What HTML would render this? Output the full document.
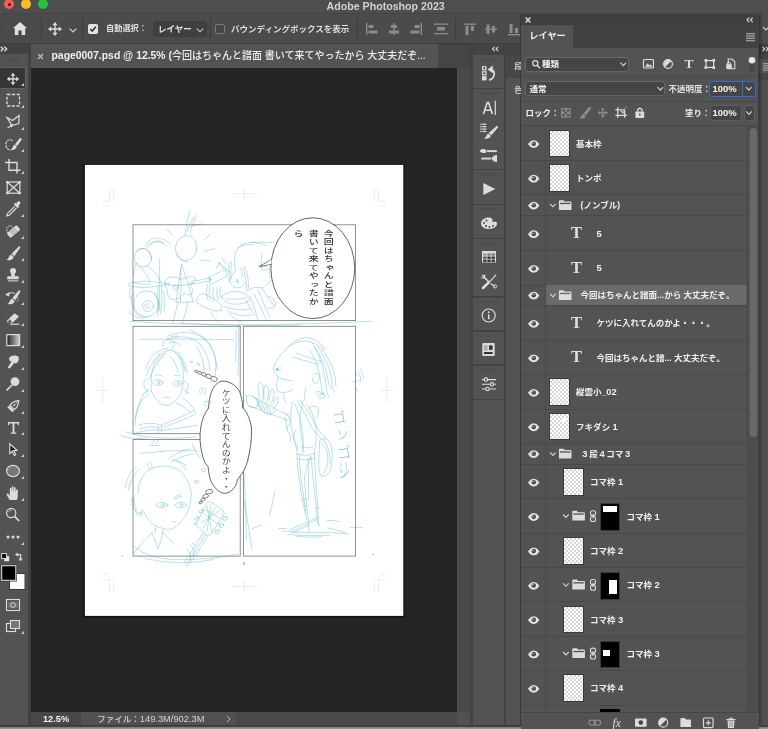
<!DOCTYPE html>
<html lang="ja">
<head>
<meta charset="utf-8">
<title>Adobe Photoshop 2023</title>
<style>
*{box-sizing:border-box;margin:0;padding:0}
html,body{width:768px;height:729px;overflow:hidden;background:#535353}
body{position:relative;font-family:"Liberation Sans","Noto Sans CJK JP",sans-serif;font-size:8.5px;color:#e6e6e6;font-weight:700;-webkit-font-smoothing:antialiased}
.abs{position:absolute}
svg{position:absolute;overflow:visible}
.t{position:absolute;white-space:nowrap;line-height:12px}
/* top */
#title{left:0;top:0;width:768px;height:13px;background:#4e4e4e}
#title .t{left:326.500px;top:-0.500px;font-size:10.650px;font-weight:700;color:#d2d2d2;line-height:12px}
.tl{position:absolute;top:-1px;width:10px;height:10px;border-radius:50%}
#opt{left:0;top:13px;width:768px;height:31px;background:#4b4b4b;border-top:1px solid #454545;border-bottom:1px solid #3e3e3e}
.vsep{position:absolute;width:1px;background:#3c3c3c}
/* tab row */
#tabrow{left:0;top:44px;width:768px;height:24px;background:#454545;border-top:1px solid #3d3d3d}
#tab{left:31px;top:44px;width:407px;height:24px;background:#535353}
#tab .t{font-size:10px;font-weight:500;color:#efefef;top:4.500px;left:20.500px;line-height:14px}
/* left tools */
#tools{left:0;top:44px;width:28px;height:681px;background:#535353}
#toolsep{left:28px;top:44px;width:3px;height:681px;background:#414141}
#toolhead{left:0;top:44px;width:28px;height:10px;background:#424242}
#movesel{left:-1px;top:67.300px;width:27px;height:21.400px;background:#363636;border:1px solid #606060;border-radius:2px}
/* canvas */
#canvas{left:31px;top:68px;width:426px;height:644px;background:#242424}
#page{left:85px;top:165px;width:318px;height:451px;background:#fff}
#vscroll{left:457px;top:68px;width:13px;height:644px;background:#494949;border-left:1px solid #505050}
#status{left:31px;top:712px;width:439px;height:13px;background:#515151}
#zoomf{left:31px;top:712px;width:50px;height:13px;background:#484848}
/* bottom */
.be{top:725px;height:4px;background:linear-gradient(#3a3a3a 0,#3a3a3a 35%,#727272 45%,#9a9a9a 100%)}
/* collapsed strip */
#strip{left:470px;top:44px;width:51px;height:681px;background:#434343}
.grp{position:absolute;left:473px;width:31px;background:#535353}
.grip{position:absolute;left:7px;top:3px;width:17px;height:2.500px;background:repeating-linear-gradient(90deg,#4a4a4a 0,#4a4a4a 1px,#525252 1px,#525252 2px)}
#col2{left:506px;top:55px;width:15px;height:670px;background:#535353}
#col2a{left:506px;top:55px;width:15px;height:23px;background:#474747}
/* right behind */
#rbehind{left:759px;top:13px;width:9px;height:712px;background:#4d4d4d}
/* layers panel */
#lp{left:520px;top:14px;width:239px;height:715px;background:#535353;border-left:1px solid #3a3a3a;border-right:1px solid #3f3f3f}
#lphead{left:521px;top:14px;width:237.500px;height:11px;background:#3f3f3f}
#lptabs{left:521px;top:24.700px;width:237.500px;height:23.300px;background:#424242}
#lptab{left:521px;top:24.700px;width:52px;height:23.300px;background:#535353}
.field{position:absolute;background:#454545;border:1px solid #666;border-radius:3px}
.hline{position:absolute;height:1px;background:#484848}
.row{position:absolute;left:521px;width:225px;border-bottom:1px solid #474747}
.eyecol{position:absolute;left:521px;width:25px;top:126px;height:586px;border-right:1px solid #474747}
.thumb{position:absolute;width:20.400px;height:27.800px;background:#fff;border:1px solid #3a3a3a;background-image:linear-gradient(45deg,#d6d6d6 25%,transparent 25%,transparent 75%,#d6d6d6 75%),linear-gradient(45deg,#d6d6d6 25%,transparent 25%,transparent 75%,#d6d6d6 75%);background-size:4px 4px;background-position:0 0,2px 2px}
.mask{position:absolute;width:20.400px;height:27.800px;background:#000;border:1px solid #3a3a3a}
.ln{position:absolute;white-space:nowrap;line-height:12px;font-size:8.5px;color:#f0f0f0}
.vt{writing-mode:vertical-rl;font-family:"Liberation Sans","Noto Sans CJK JP",sans-serif;font-weight:500;font-size:10px;letter-spacing:1.54px;line-height:12px;width:12px;color:#333;white-space:nowrap;transform-origin:0 0;transform:scaleY(0.74)}
.vt2{font-size:9px;font-weight:400;color:#444;letter-spacing:1.1px;transform:scaleY(0.85)}
.dg{font-size:9.400px}
.dw{display:inline-block;width:8.600px;text-align:center;font-size:9.400px}
</style>
</head>
<body><div id="root" style="position:absolute;left:0;top:0;width:768px;height:729px;overflow:hidden;will-change:transform">
<!-- SKELETON -->
<div id="title" class="abs"><div class="t">Adobe Photoshop 2023</div>
<div class="tl" style="left:4px;background:#ee5f57"></div><div class="tl" style="left:21px;background:#f6bd2e"></div><div class="tl" style="left:38px;background:#28c33f"></div>
<div class="abs" style="left:8px;top:3px;width:3px;height:3px;border-radius:50%;background:#5a0b08"></div>
</div>
<div id="opt" class="abs"></div>
<div id="tabrow" class="abs"></div>
<div id="tab" class="abs"><svg style="left:6.300px;top:8.800px" width="7" height="7" viewBox="0 0 7 7"><path d="M1 1 L6 6 M6 1 L1 6" stroke="#bcbcbc" stroke-width="1.250"/></svg><div class="t"><span style="font-size:10.4px;font-weight:700">page0007.psd @ 12.5% (</span>今回はちゃんと譜面 書いて来てやったから 大丈夫だぞ...</div></div>
<div id="tools" class="abs"></div><div id="toolsep" class="abs"></div><div id="toolhead" class="abs"></div><div id="movesel" class="abs"></div>
<div id="canvas" class="abs"></div>
<div id="vscroll" class="abs"></div>
<div id="status" class="abs"></div><div id="zoomf" class="abs"></div>
<div class="abs" style="left:236px;top:712px;width:221px;height:13px;background:#494949"></div>
<div class="t" style="left:43px;top:712.800px;font-size:9.200px;color:#f2f2f2;line-height:12px">12.5%</div>
<div class="t" style="left:97.300px;top:712.800px;font-size:8.500px;font-weight:500;color:#d4d4d4;line-height:12px">ファイル：<span style="font-size:9.300px">149.3M/902.3M</span></div>
<svg style="left:226px;top:715px" width="5" height="8" viewBox="0 0 5 8"><path d="M1 0.800 L4 4 L1 7.200" fill="none" stroke="#bdbdbd" stroke-width="1"/></svg>
<div id="strip" class="abs"></div>
<div id="col2" class="abs"></div><div id="col2a" class="abs"></div>
<div id="rbehind" class="abs"></div>
<div id="lp" class="abs"></div><div id="lphead" class="abs"></div><div id="lptabs" class="abs"></div><div id="lptab" class="abs"></div>

<!-- options bar content -->
<div class="vsep" style="left:1px;top:21px;height:16px;background:#414141"></div>
<svg style="left:13px;top:22px" width="14" height="13" viewBox="0 0 14 13"><path d="M7 0 L0 6.2 L1.8 6.2 L1.8 13 L5.4 13 L5.4 8.6 L8.6 8.6 L8.6 13 L12.2 13 L12.2 6.2 L14 6.2 Z" fill="#e0e0e0"/></svg>
<div class="vsep" style="left:41px;top:18px;height:21px"></div>
<svg style="left:48px;top:22px" width="14" height="14" viewBox="0 0 14 14"><g fill="#dcdcdc"><path d="M7 0 L9.6 3.2 L7.7 3.2 L7.7 6.3 L10.8 6.3 L10.8 4.4 L14 7 L10.8 9.6 L10.8 7.7 L7.7 7.7 L7.7 10.8 L9.6 10.8 L7 14 L4.4 10.8 L6.3 10.8 L6.3 7.7 L3.2 7.7 L3.2 9.6 L0 7 L3.2 4.4 L3.2 6.3 L6.3 6.3 L6.3 3.2 L4.4 3.2 Z"/></g></svg>
<svg style="left:69px;top:28px" width="8" height="5" viewBox="0 0 8 5"><path d="M0.6 0.6 L4 4 L7.4 0.6" fill="none" stroke="#d0d0d0" stroke-width="1.2"/></svg>
<div class="vsep" style="left:82px;top:18px;height:21px"></div>
<div class="abs" style="left:88px;top:24px;width:10px;height:10px;background:#e4e4e4;border-radius:2px"></div>
<svg style="left:88px;top:24px" width="10" height="10" viewBox="0 0 10 10"><path d="M2.2 5 L4.2 7 L7.8 2.8" fill="none" stroke="#333" stroke-width="1.6"/></svg>
<div class="t" style="left:106px;top:23px;font-size:8.2px;color:#dedede">自動選択：</div>
<div class="abs" style="left:153px;top:21px;width:54px;height:16px;background:#3f3f3f;border-radius:2px"></div>
<div class="t" style="left:158px;top:23px;font-size:8.5px;color:#e4e4e4">レイヤー</div>
<svg style="left:196px;top:28px" width="8" height="5" viewBox="0 0 8 5"><path d="M0.8 0.6 L4 3.8 L7.2 0.6" fill="none" stroke="#c8c8c8" stroke-width="1.1"/></svg>
<div class="vsep" style="left:210px;top:18px;height:21px"></div>
<div class="abs" style="left:215px;top:24px;width:10px;height:10px;background:#464646;border:1px solid #7a7a7a;border-radius:2px"></div>
<div class="t" style="left:231px;top:23px;font-size:8.5px;color:#dedede">バウンディングボックスを表示</div>
<div class="vsep" style="left:357px;top:18px;height:21px"></div>
<!-- align icons -->
<g></g>
<svg style="left:366px;top:23px" width="160" height="13" viewBox="0 0 160 13"><g fill="#8c8c8c">
<rect x="0" y="0" width="1.4" height="12"/><rect x="2.5" y="2" width="5" height="3"/><rect x="2.5" y="7.5" width="9" height="3"/>
<rect x="27.3" y="0" width="1.4" height="12"/><rect x="25" y="2" width="6" height="3"/><rect x="23" y="7.5" width="10" height="3"/>
<rect x="54.6" y="0" width="1.4" height="12"/><rect x="48.5" y="2" width="5" height="3"/><rect x="44.5" y="7.5" width="9" height="3"/>
<rect x="68" y="0.5" width="14" height="1.3"/><rect x="71" y="4" width="8" height="3.5"/><rect x="68" y="10" width="14" height="1.3"/>
<rect x="98" y="0.5" width="12" height="1.4"/><rect x="99.5" y="3" width="3" height="9"/><rect x="105" y="3" width="3" height="5"/>
<rect x="119" y="5.5" width="12" height="1.4"/><rect x="120.5" y="1.5" width="3" height="9.5"/><rect x="126" y="3" width="3" height="6.5"/>
<rect x="142" y="11" width="12" height="1.4"/><rect x="143.500" y="1" width="3" height="9"/><rect x="149" y="5" width="3" height="5"/>
</g></svg>
<div class="vsep" style="left:455px;top:18px;height:21px"></div>


<svg style="left:0;top:0" width="30" height="729" viewBox="0 0 30 729">
<g fill="none" stroke="#dedede" stroke-width="1.400"><path d="M0.800 46.700 L3.100 49 L0.800 51.300 M4.400 46.700 L6.700 49 L4.400 51.300"/></g>
<g stroke="#4a4a4a" stroke-width="1"><path d="M5.5 58 V60.5 M7.5 58 V60.5 M9.5 58 V60.5 M11.5 58 V60.5 M13.5 58 V60.5 M15.5 58 V60.5 M17.5 58 V60.5 M19.5 58 V60.5"/></g>
<!-- move -->
<g transform="translate(13 79)" fill="#dcdcdc"><path d="M0 -6.2 L2.4 -3.2 L0.7 -3.2 L0.7 -0.7 L3.2 -0.7 L3.2 -2.4 L6.2 0 L3.2 2.4 L3.2 0.7 L0.7 0.7 L0.7 3.2 L2.4 3.2 L0 6.2 L-2.4 3.2 L-0.7 3.2 L-0.7 0.7 L-3.2 0.7 L-3.2 2.4 L-6.2 0 L-3.2 -2.4 L-3.2 -0.7 L-0.7 -0.7 L-0.7 -3.2 L-2.4 -3.2 Z"/></g>
<path d="M24 83 L24 86 L21 86 Z" fill="#c8c8c8"/>
<!-- marquee -->
<rect x="7" y="94.5" width="12.5" height="11.5" fill="none" stroke="#dcdcdc" stroke-width="1.3" stroke-dasharray="3 1.6" rx="0.5"/>
<path d="M24 105 L24 108 L21 108 Z" fill="#c8c8c8"/>
<!-- poly lasso -->
<g fill="none" stroke="#dcdcdc" stroke-width="1.2" stroke-linejoin="miter"><path d="M7 117.5 L12.5 120.5 L19 115.5 L18.8 123.5 L12 125.5 Z"/><path d="M13 124.5 L7.5 128 M10.2 124.6 L12 127.2"/></g>
<path d="M24 127 L24 130 L21 130 Z" fill="#c8c8c8"/>
<!-- quick select -->
<g><path d="M12.600 141 C10.800 138.800 6.400 139.400 5.900 143.800 C5.600 148 8.400 150.600 11.200 149.800" fill="none" stroke="#dcdcdc" stroke-width="1.100" stroke-dasharray="2.600 0.900"/><path d="M20.200 137.800 L21.900 139.300 L17.200 146 L15 144.200 Z" fill="#dcdcdc"/><path d="M14.500 144.600 L16.800 146.500 C16.300 149 13.800 150.400 11 149.900 C12.600 148.600 12.700 146 14.500 144.600 Z" fill="#dcdcdc"/></g>
<path d="M24 149 L24 152 L21 152 Z" fill="#c8c8c8"/>
<!-- crop -->
<g fill="none" stroke="#dcdcdc" stroke-width="1.400"><path d="M9 159 V170.200 H20.500 M5 162.500 H17 V173.500"/></g>
<path d="M24 171 L24 174 L21 174 Z" fill="#c8c8c8"/>
<!-- frame -->
<g fill="none" stroke="#dcdcdc" stroke-width="1.200"><rect x="7.200" y="182" width="12.600" height="11.200"/><path d="M7.200 182 L19.800 193.200 M19.800 182 L7.200 193.200"/></g>
<g fill="#dcdcdc"><rect x="6.200" y="181" width="2.200" height="2.200"/><rect x="18.600" y="181" width="2.200" height="2.200"/><rect x="6.200" y="192" width="2.200" height="2.200"/><rect x="18.600" y="192" width="2.200" height="2.200"/></g>
<!-- eyedropper -->
<g><path d="M17.800 201.600 C19.300 200.500 21.200 202.300 20.100 203.900 L18.300 205.900 L19.200 206.800 L17.700 208.300 L13.700 204.300 L15.200 202.800 L16.100 203.700 Z" fill="#dcdcdc"/><path d="M14.700 206.300 L7.400 213.600 L6.700 216 L9.100 215.300 L16.400 208" fill="none" stroke="#dcdcdc" stroke-width="1.200" stroke-linejoin="round"/></g>
<path d="M24 214 L24 217 L21 217 Z" fill="#c8c8c8"/>
<!-- healing -->
<g><g transform="translate(13.5 231.5) rotate(-40)"><rect x="-6.5" y="-3" width="13" height="6" rx="1.2" fill="#dcdcdc"/><path d="M-2.6 -3 V3 M-0.9 -3 V3 M0.9 -3 V3 M2.6 -3 V3" stroke="#777" stroke-width="0.6"/></g><path d="M8 233 C5.5 230 6.5 226 10 225.8 C11.6 225.8 12.6 226.8 13 227.8" fill="none" stroke="#dcdcdc" stroke-width="0.9" stroke-dasharray="1.6 0.8"/></g>
<path d="M24 236 L24 239 L21 239 Z" fill="#c8c8c8"/>
<!-- brush -->
<g fill="#dcdcdc"><path d="M19.200 246.100 L20.500 247.200 L14.300 256.300 L11.400 254 Z"/><path d="M10.800 254.600 L13.700 256.900 C13.100 259.500 10 260.700 6.600 260.100 C8.800 258.800 8.800 256 10.800 254.600 Z"/></g>
<path d="M24 258 L24 261 L21 261 Z" fill="#c8c8c8"/>
<!-- stamp -->
<g fill="#dcdcdc"><circle cx="13" cy="271" r="3"/><path d="M11.6 272.5 H14.4 L15.2 276.4 H10.8 Z"/><rect x="7.2" y="276.3" width="11.6" height="3" rx="0.6"/><rect x="7.8" y="280.2" width="10.4" height="1.3" fill="#bdbdbd"/></g>
<path d="M24 280 L24 283 L21 283 Z" fill="#c8c8c8"/>
<!-- history brush -->
<g fill="#dcdcdc"><path d="M19.200 290.100 L20.500 291.200 L15.300 300.300 L12.400 298 Z"/><path d="M11.800 298.600 L14.700 300.900 C14.100 303.500 11 304.700 7.600 304.100 C9.800 302.800 9.800 300 11.800 298.600 Z"/><path d="M5 294.8 L9.4 292 L9.2 296.6 Z"/><path d="M8.6 293.8 C11 292.4 13.6 292.6 15 293.6" fill="none" stroke="#dcdcdc" stroke-width="1"/><path d="M17.6 296.6 C18.6 298.6 18.2 300.6 16.6 302" fill="none" stroke="#dcdcdc" stroke-width="0.8" stroke-dasharray="1.2 0.8"/></g>
<path d="M24 302 L24 305 L21 305 Z" fill="#c8c8c8"/>
<!-- eraser -->
<g><path d="M14.6 313.2 L19 316.4 L12.8 322.6 L7.4 322.6 L7 320.6 Z" fill="#dcdcdc"/><path d="M9.3 319.2 L11.8 321.4 L10.6 322.6 L8 322.6 Z" fill="#535353"/><path d="M10 324.2 H19.4" stroke="#dcdcdc" stroke-width="1.2"/></g>
<path d="M24 323 L24 326 L21 326 Z" fill="#c8c8c8"/>
<!-- gradient -->
<defs><linearGradient id="gt" x1="0" x2="1"><stop offset="0" stop-color="#222"/><stop offset="1" stop-color="#d0d0d0"/></linearGradient></defs>
<rect x="6.8" y="334.6" width="12.8" height="11" fill="url(#gt)" stroke="#dcdcdc" stroke-width="1.2"/>
<path d="M24 345 L24 348 L21 348 Z" fill="#c8c8c8"/>
<!-- smudge -->
<g fill="#dcdcdc"><path d="M9.4 357.4 C11 355.2 16.4 354.6 18.2 356.6 C19.8 358.6 18.6 362.6 16 363.4 C15.2 363.6 14.8 363 14.6 362.4 L10.2 368 C9.4 369 7.6 368 8.2 366.8 L11.6 361.4 C10 361.6 8.4 359.6 9.4 357.4 Z"/></g>
<path d="M24 367 L24 370 L21 370 Z" fill="#c8c8c8"/>
<!-- dodge -->
<g><circle cx="15" cy="381.6" r="4.4" fill="#dcdcdc"/><path d="M12 385 L6.6 390.4" stroke="#dcdcdc" stroke-width="1.5"/></g>
<path d="M24 389 L24 392 L21 392 Z" fill="#c8c8c8"/>
<!-- pen -->
<g transform="translate(13.5 406) rotate(45)"><path d="M0 -7.5 C2.6 -4.2 4 -1.6 3 2 H-3 C-4 -1.6 -2.6 -4.2 0 -7.5 Z" fill="none" stroke="#dcdcdc" stroke-width="1.2"/><path d="M0 -6.8 V-1.6" stroke="#dcdcdc" stroke-width="0.9"/><circle cx="0" cy="-1" r="1" fill="#dcdcdc"/><rect x="-3.6" y="2.8" width="7.2" height="2.4" fill="#dcdcdc"/></g>
<path d="M24 411 L24 414 L21 414 Z" fill="#c8c8c8"/>
<!-- T -->
<g fill="#dcdcdc"><path d="M8 422 H19 V425 H17.8 V423.4 H14.4 V432.4 H16.2 V433.8 H10.8 V432.4 H12.6 V423.4 H9.2 V425 H8 Z"/></g>
<path d="M24 432 L24 435 L21 435 Z" fill="#c8c8c8"/>
<!-- arrow -->
<path d="M9.800 443.800 L9.800 453.600 L12.300 451.200 L14.300 455.400 L15.700 454.700 L13.700 450.600 L17 450.400 Z" fill="#1e1e1e" stroke="#e2e2e2" stroke-width="1.100" stroke-linejoin="miter"/>
<path d="M24 454 L24 457 L21 457 Z" fill="#c8c8c8"/>
<!-- ellipse -->
<ellipse cx="13" cy="471" rx="6.4" ry="5.6" fill="#787878" stroke="#dcdcdc" stroke-width="1.2"/>
<path d="M24 476 L24 479 L21 479 Z" fill="#c8c8c8"/>
<!-- hand -->
<g fill="#dcdcdc"><path d="M9.6 500 C8.8 498.4 7.6 496.4 6.8 495 C6.2 493.8 7.6 493 8.6 494.2 L9.8 495.8 L9.8 488.6 C9.8 487.4 11.4 487.4 11.4 488.6 L11.6 492.4 L11.8 487.2 C11.8 486 13.4 486 13.4 487.2 L13.6 492.4 L14 488 C14 486.8 15.6 486.8 15.6 488 L15.6 492.8 L16.2 490 C16.4 488.8 17.8 489 17.8 490.2 L17.8 496 C17.8 498 17 499.4 16.6 500 Z"/></g>
<path d="M24 498 L24 501 L21 501 Z" fill="#c8c8c8"/>
<!-- zoom -->
<g fill="none" stroke="#dcdcdc"><circle cx="11.2" cy="513" r="4.6" stroke-width="1.2"/><path d="M14.6 516.4 L19.2 521" stroke-width="1.7"/><path d="M8.6 512 C9 510.6 10.4 509.8 11.8 510" stroke-width="0.8"/></g>
<!-- dots -->
<g fill="#dcdcdc"><circle cx="8" cy="537" r="1.5"/><circle cx="13" cy="537" r="1.5"/><circle cx="18" cy="537" r="1.5"/></g>
<path d="M24 542 L24 545 L21 545 Z" fill="#c8c8c8"/>
<!-- default colors -->
<rect x="4.2" y="556.2" width="5" height="5" fill="#e6e6e6"/><rect x="1.6" y="553.6" width="5" height="5" fill="#111" stroke="#e6e6e6" stroke-width="0.9"/>
<!-- swap -->
<g fill="none" stroke="#dcdcdc" stroke-width="1.2"><path d="M17.4 554.6 H20.6 V559"/></g><path d="M15 554.6 L17.8 552.4 V556.8 Z M20.6 561.2 L18.4 558.4 H22.8 Z" fill="#dcdcdc"/>
<!-- swatches -->
<rect x="9.5" y="573.5" width="15.5" height="16" fill="#fff" stroke="#3a3a3a" stroke-width="1"/>
<rect x="1" y="565" width="15.5" height="16" fill="#000" stroke="#3a3a3a" stroke-width="1"/><rect x="1.7" y="565.7" width="14.1" height="14.6" fill="none" stroke="#e8e8e8" stroke-width="1"/>
<!-- quick mask -->
<rect x="6.5" y="599.5" width="13" height="11" fill="none" stroke="#dcdcdc" stroke-width="1.1"/><rect x="7.6" y="601.6" width="10.8" height="6.8" fill="#6e6e6e"/><circle cx="13" cy="605" r="2.4" fill="#6e6e6e" stroke="#dcdcdc" stroke-width="0.9"/>
<!-- screen mode -->
<rect x="6.5" y="623.5" width="9" height="8" fill="none" stroke="#dcdcdc" stroke-width="1.1"/><rect x="10.5" y="620.5" width="9" height="8" fill="#777" stroke="#dcdcdc" stroke-width="1.1"/>
<path d="M24 631 L24 634 L21 634 Z" fill="#c8c8c8"/>
</svg>


<svg style="left:0;top:0" width="768" height="729" viewBox="0 0 768 729">
<!-- page shadow -->
<rect x="83.200" y="164" width="321.600" height="453.700" fill="#141414"/>
<rect x="84.900" y="164.900" width="318.400" height="451" fill="#ffffff"/>
<!-- registration marks -->
<g fill="none" stroke="#e4e4ee" stroke-width="0.7">
<path d="M109.5 189 V201 M113.5 189 V202 M103 201.3 H109.5 M103 206 H108.5"/>
<path d="M378.5 189 V201 M374.5 189 V202 M378.5 201.3 H385.5 M380 206 H385.5"/>
<path d="M109.5 592 V580 M113.5 592 V579 M103 579.7 H109.5 M103 574 H108.5"/>
<path d="M378.5 592 V580 M374.5 592 V579 M378.5 579.7 H385.5 M380 574 H385.5"/>
<path d="M233 193.5 H257 M244.3 188 V200"/>
<path d="M233 586.5 H257 M244.3 580 V592"/>
<path d="M96.5 390.5 H109 M102.6 378 V403"/>
<path d="M380.5 390.5 H393 M386.6 378 V403"/>
</g>
<!-- sketch lines -->
<g id="sk" fill="none" stroke="#4fb4c9" stroke-opacity="0.680" stroke-width="0.600" stroke-linecap="round" stroke-linejoin="round">
<!-- top panel: stick figure -->
<ellipse cx="186.200" cy="248.100" rx="10.700" ry="12.500" transform="rotate(8 186.2 248.1)"/>
<path d="M177 254 Q180 262 188 262"/>
<path d="M185 235.500 Q186.500 221 190 210.800 M190 233 Q192.500 222 196.600 215 M190.800 226.400 Q196 224.500 202.400 223.900 M187 232 Q189 224 193 218"/>
<path d="M204 240.400 L210.600 233.800 M204 251.900 Q209 249.500 214.700 248.600 M200.700 260.100 Q205 260.300 209.800 261 M167 229.700 Q170 232 172.700 235.500"/>
<path d="M181.800 264.300 Q178.500 283 176 302 M181.800 264.300 Q188 283 193.300 302 M176 302 Q180 303.500 184 302.500 Q189 301.500 193.300 302 M178 302 Q175.500 313 172.700 323.500 M188 302 Q185.500 313 182.600 323 M180.500 268 Q181.500 285 180.500 302"/>
<path d="M165 283 Q165 277.500 171 277 Q177 276.500 181 279.500 Q186 277.500 191 276 Q196 276 195.800 279.500 Q193 282.500 189.500 284.500 Q194 289 192 294 Q188 296.500 184 293 Q179 300 172 299.500 Q166 296 167.500 290 Q164.500 287 165 283 Z"/>
<circle cx="175.700" cy="287.300" r="2.500"/>
<path d="M190 281.500 Q200 280.500 210.600 278 M190 284.500 Q200 283 210.600 280.800 M168 285 Q180 287 195 283"/>
<!-- drums -->
<path d="M145.600 246 Q148 239 156.300 238 Q165 238 171 244.500 M147 247 Q152 240.500 160 241 Q164 242 166 246 M150 244 Q156 239 163 243.500"/>
<ellipse cx="143" cy="257.700" rx="8.600" ry="9.300"/><path d="M136 252 Q140 247 146 249 Q151 253 151.500 260 M137 263 Q133 268 134 276 M147 266 Q156 271 161 282 M139 266 Q146 272 150 282"/>
<path d="M128.300 284 Q141 279.500 154 282 Q163 283 169.400 284 M128.500 285.500 Q141 289 154 286.500 Q163 285.500 169.400 284.300 M132 282 Q140 285 150 284"/>
<ellipse cx="146.400" cy="303.800" rx="12.500" ry="13"/><ellipse cx="148" cy="306" rx="5.500" ry="5.500"/><path d="M148 306 Q150 303.500 147.500 302.500 Q144.500 303.500 145.500 307 Q147.500 309.500 150.500 307.500"/>
<path d="M132 287 Q127 293 131 300 M133 292 Q129 300 134 310 Q139 318 148 318 M129 312 Q135 318 143 318.500 M154 292 Q160 300 158 312"/>
<path d="M159.600 259 V310 M157.800 286 V316 M161.500 285 Q163 300 160.500 314 M163 290 Q166 300 164 312"/>
<!-- hand/stick and hi-hat -->
<path d="M209 277 L224 270 Q227.500 272 227 276 L212 284 Q208.500 282 209 277 Z"/><circle cx="210.300" cy="279.300" r="0.800"/>
<path d="M216.400 268.400 L219.700 262.600 L227 270.800 M229 261.800 V282.400 M231.500 262 Q230.500 270 231 280"/>
<path d="M207.500 285 Q205.500 292 207.500 300 M210 284 Q208.500 292 210 300 M213.500 287 Q212 294 214 301 M217 288 Q216 294 218 300 M220.500 287 Q219 293 221 299"/>
<path d="M197 298.500 Q199 293 205 294 Q212 297 218 302 Q224 306 221 310.500 Q216 312.500 209 309 Q200 306 197 302.500 Z"/>
<path d="M222 296 Q230 290 240 292 Q248 294 250 300 Q244 305 232 304 Q224 303 222 296 Z M224 306 Q236 312 250 309 M227 310 Q238 318 252 315 M211 312 Q213 318 219 322 M229 313 Q233 319 241 322 M226 299 Q236 300 246 298"/>
<!-- top right character -->
<path d="M234.800 256.500 Q236 247 244 243.500 Q250 241 257 243 Q262 240.500 268 243 Q273 240.500 277 242.500"/>
<path d="M238 248 Q246 243 254 245 M250 242.800 Q258 241 266.300 245.600"/>
<path d="M234.800 256.500 Q233 264 236 270 Q233 274 229.500 279 Q230 286 236 288 Q242 288 245.500 283"/>
<path d="M243 267.500 Q246.500 278 247 290.800 M240.500 268 Q243 272 242 277 M244.500 266 Q249 276 248.500 288"/>
<path d="M237 279 L238 283.500 M236 281.500 L239 281"/>
<path d="M218 262 L223 268 L230 272 M222 258 L226 264"/>
<path d="M254 293.600 Q260 306 266.300 319.700 M258 290 Q264 304 270 318 M250 296 Q255 308 258 320 M262 288 Q268 298 274 306"/>
<path d="M248 290 Q254 286 262 288 Q268 284 272 280 M272 262 Q268 270 270 278 M262 270 Q260 262 262 254"/>
<path d="M262 267 Q265 265.500 268 267.500 M263 269.500 Q266 271 269 269.500"/>
<path d="M268 296 Q274 298 276 304 Q274 310 268 308 M246 300 Q250 310 256 316"/>
<path d="M130 321.500 Q200 326 290 324.200 Q330 323.200 372 321.300 M180 323 Q240 327 300 325"/>
<!-- mid-left panel: girl -->
<path d="M151.300 390.800 Q150 372 156 360 Q163 349 172 350.500 Q181 354 183 368 Q184 382 181.800 390.800 Q178 400 171 404.500 Q166 406.500 161.500 404 Q154 399 151.300 390.800 Z"/>
<path d="M163 346.500 Q162 341 167 339.500 Q173 339 174.500 343.500 Q174 348 170 349.500 M167 339.500 Q172 335 178 336 M169 343 Q175 340 180 345"/>
<path d="M145.600 369.400 Q148 358 157 352 Q163 348 168 348 M146.500 376 Q150 362 160 354 M149 380 Q153 366 164 356 M157 362 Q160 356 166 353 M178 352 Q185 360 187 372 M174 350.500 Q183 358 185.500 372 M170 356 Q176 362 178 372"/>
<ellipse cx="157.900" cy="382.600" rx="4.800" ry="2.700"/><ellipse cx="177.700" cy="383.400" rx="4.800" ry="2.700"/><circle cx="158.600" cy="382.600" r="1.300"/><circle cx="178.300" cy="383.400" r="1.300"/>
<path d="M155 375.500 Q158 374 161.500 375.500 M174.500 375.500 Q178 374 181 376 M163.500 397.400 H169.500"/>
<path d="M147 379 Q143 380 144 386 Q145.500 391 149 389.500 M184 381 Q188.500 381.500 188 387 Q187 391.500 184 390"/>
<circle cx="186.700" cy="392.400" r="1.300"/><circle cx="146.500" cy="391.500" r="1.200"/>
<path d="M150 394 Q141 398 138 408 Q135.500 416 135 425 M144.800 392.400 Q138 402 135 418.800 M183 398 Q191 403 195.800 412.200 M176 403 Q184 406 190 412"/>
<path d="M138.200 425.300 Q150 421 161.200 425.300 Q178 419 194.100 410.500 M134.900 433.600 Q150 428 162 430.500 Q180 428 197.400 425.300 M161.200 425.300 Q163 428 161.500 431 M140 429 Q150 425 160 428 M164 427 Q180 422 196 414 M158 426 Q159.500 430 157 433"/>
<path d="M139.800 339.400 Q186 338.600 233.600 339.600"/>
<path d="M168 336 Q186 328 202 337 Q216 348 217.200 369.400 M172 338 Q188 334 199 343 Q209 354 210 370 M190 330 Q208 336 214 352 Q218 366 214 380 M196 346 Q204 356 204 372"/>
<path d="M238.600 325 Q239.500 350 238 375 M236 330 Q237 345 235.500 362"/>
<path d="M190.500 361.500 Q192.500 360 192.500 362.500 Q191 364 190.500 361.500 M197 363.500 Q199.500 362 200 365 Q198 366.500 197 363.500"/>
<path d="M126 432 Q150 441 196 437 M122 436 Q134 440 146 438"/>
<!-- right panel: fish-head person -->
<path d="M285.800 349.700 Q292 340 305.600 337.300 Q318 338 325.300 349.700 M288 347 Q296 341 306 341 Q316 342 322 349"/>
<path d="M285.800 349.700 Q276 358 273.500 368.600 Q273.500 373 278.400 377.700 Q285 380 292.400 381"/>
<path d="M277.600 390.800 Q282 395 292.400 390 M278.400 377.700 Q275 384 277.600 390.800 M284 394 Q283 400 287 404"/>
<circle cx="277.200" cy="369.400" r="1.200" fill="#4fb4c9" fill-opacity="0.7"/>
<path d="M279.500 367 L281 368 M279.500 371.500 L281 371"/>
<path d="M292.400 357 Q305 361 318.700 364.500 M296 353 Q310 358 322 362"/>
<path d="M312.100 343.100 Q326 362 328 380 Q329 388 335.200 390.800 M315.400 348 Q325 368 326 386 Q327 394 328.600 397.400 M318 347 Q332 366 332.500 388 M322 349 Q336 368 336 386 M310 350 Q320 368 321 384 Q321.500 392 324 396"/>
<path d="M313.800 374.400 Q318.500 371 319.500 377 Q319 383.500 314.500 383.400 Q311 381 313 377.500"/>
<path d="M316 392 Q319 390 322 393 M317 395.500 Q321 392 325 394.500 M318 398 L324 393 M320 399 L326 396"/>
<path d="M306 388 Q303 394 305 400"/>
<!-- hand with fingers -->
<path d="M259.500 398 Q257 388 259 383 Q262 381 263 386 Q264 392 263 400 M264 399 Q263 388 265.500 385 Q268.500 385 268.500 390 Q268.500 396 267 402 M269 401 Q269.500 392 272 389 Q275 389.500 274 395 Q273 400 271 404 M273 404 Q275 398 277.500 396.500 Q279.500 398 277.500 403 Q276 407 273 409"/>
<path d="M258 402 Q260 410 266 414 Q272 416 276 410"/>
<!-- guitar head + neck -->
<path d="M246.300 395.800 Q250 394 253 396.500 L258 400.500 Q259 404 257 407 Q252 409 248.500 406 Q245.500 401 246.300 395.800 Z"/>
<path d="M253 396.500 L289 416 M249 406 L288 420.500 M256 399 L259 408 M259 400.500 L262 409.500 M262 402 L265 411 M265 403.500 L268 412.500 M268 405 L271 414"/>
<path d="M287 414 Q291 418 290 424 Q286 426 288 432 Q292 436 290 442 M284 416 Q288 422 286 430"/>
<!-- torso -->
<path d="M292.400 402.400 Q290 412 291 424 Q293 438 297 450 M297.300 400.700 Q306 414 312 428 Q318 436 322 440.200 M300 400 Q310 412 316 426 Q320 434 326 438 M303 401 Q299 414 300 428 Q302 440 304 452"/>
<path d="M295 404 Q301 418 303 436 Q304 446 302 454 M307 404 Q314 414 316 428 Q317 442 314 453"/>
<path d="M309 408 Q314 404 318 408 Q320 414 316 418 M296 430 Q292 436 295 442 Q299 446 297 452"/>
<!-- guitar body on back -->
<path d="M320 440 Q327 436 331 444 Q334 456 331 468 Q327 478 321 476 Q318 470 319 458 Z M322 444 Q328 448 328 460 Q327 470 323 474 M324 440 Q331 450 330 464"/>
<!-- legs -->
<path d="M296.500 453.200 Q298 474 301 492 Q303.500 504 305.400 513.800 M299 454 Q300 476 303.500 496 Q305.500 508 306.500 520 M310.800 456.700 Q306.500 466 304.500 476.400 Q305 494 307.500 512 Q308.500 524 309 531.600"/>
<path d="M314.300 453 Q315.500 476 317 498 Q318 514 318.800 526.300 M311 456 Q313 478 315.500 500 Q316.500 514 317.500 524 M308 458 Q309 480 308.500 500"/>
<path d="M297 454 Q306 457 315 453.500 M298 459 Q306 461.500 314 458.500 M300 446 Q308 450 314 446"/>
<path d="M302 500 L306 499 M303 506 L307 505.500 M316 508 L319 507.500"/>
<!-- ground -->
<path d="M289.400 529.900 Q304 523 317.900 517.400 M291 532 Q303 526 316 520 M293 533 L309 525"/>
<path d="M278.700 528.500 H286 M282 531 Q300 533 320 532.500 Q334 532 348.200 534 M288 534.500 Q306 536.500 330 535.200 M296 536.500 Q310 538 322 536.800 M327 520.500 Q334 520 339 521.500 M328 528 Q338 530 346 533"/>
<path d="M350 527.200 Q356 527 362.500 527.700"/>
<path d="M275.100 491.500 Q272.500 503 269.700 515.600 M251.900 529 Q256 526.500 260.800 525.400 M243.500 497.800 Q248 522 251.900 549.500"/>
<path d="M346 462 Q348.500 470 343 477 M340.500 462.500 L341.500 467"/>
<path d="M355 372 L357 376 M352 382 Q356 380 360 381 M358.500 372 Q361 376 361 382 M360.500 369 Q363.500 373 363.500 379 M356 388 L358 392"/>
<!-- bottom-left panel: boy -->
<path d="M137.800 493.500 Q139 476 150 469 Q161 464 174 467.500 Q188 474 191.300 491.700 Q191.500 505 186 514.900 Q181 524 171.700 529.200 Q162 530 152.100 523.800 Q146 518 143.200 511.300"/>
<path d="M135.200 495.300 Q131.500 498 133.500 506 Q135.500 514 139.600 516.700 Q142.500 516 142 510 M134.500 499 Q133 502 135 506 M136 508 Q134.500 510.500 137.500 513.500"/>
<circle cx="139.800" cy="513" r="1.100"/><path d="M133 497 L131 501 M134 502 L131.500 505 M135 507 L132.500 509.500"/>
<ellipse cx="161.900" cy="505.100" rx="5.800" ry="2.700"/><ellipse cx="180.600" cy="505.100" rx="5.600" ry="2.700"/><circle cx="163" cy="505.100" r="1.400"/><circle cx="181.500" cy="505.100" r="1.400"/>
<path d="M173.500 498 Q177 495.500 180.600 494.400 M174.500 499.500 Q178 497 181.500 496 M172 521.500 Q173.500 523 176 521.500 M155.700 527.400 Q156 530 154.800 532.700 M163 529.500 Q163.500 531 162.800 532.700"/>
<path d="M152.100 532.700 Q155 541 158.300 548.800 Q161 541 162.800 532.700 M152.100 532.700 Q142 541 133.400 554.100 M162.800 532.700 Q168.500 537 173.500 543.400"/>
<path d="M125.300 488.100 Q127 474 136 466.700 M128.500 490 Q130.500 477 139.500 469 M146.700 463.200 Q148.500 466 150 469.500 M150 461 Q151.500 464.500 152.500 468 M176 461 Q182 463.500 186 470 M172 459.500 Q180 460.500 186 466"/>
<path d="M139.600 453.400 Q168 449.500 196.700 450.700 M152 444 L155 440 M156 444 L158 440.500 M150 445.500 H160"/>
<path d="M168 459 Q178 451 190 449 M172 462 Q182 455 194 454 M192 444 Q196 452 200 458"/>
<!-- guitar head -->
<path d="M207.400 502.400 Q209.500 500.500 212 502.500 L223.400 511.300 Q225 513.500 223 516 L210.900 534.500 Q208 536 205 534 L196.700 525.600 Q196 523 198 520.500 Z"/>
<path d="M207 506 L212 532 M211 505 L207 531 M215 508 L203 528 M219 511 L201 523 M203 513 L219 525 M205 509 L221 519"/>
<ellipse cx="225.200" cy="518.500" rx="2.400" ry="1.600" transform="rotate(-30 225.200 518.500)"/><ellipse cx="221.600" cy="525.600" rx="2.400" ry="1.600" transform="rotate(-30 221.600 525.600)"/><ellipse cx="217.200" cy="531.800" rx="2.400" ry="1.600" transform="rotate(-30 217.200 531.800)"/>
<ellipse cx="201.100" cy="511.300" rx="2.200" ry="1.400" transform="rotate(-30 201.100 511.300)"/><ellipse cx="196.700" cy="518.500" rx="2.200" ry="1.400" transform="rotate(-30 196.700 518.500)"/>
<path d="M222 516 L224.500 517.500 M218.500 523 L221 524.500 M214.500 529.500 L216.500 531 M193 524.500 L195.500 522.500 L195 525.500"/>
<path d="M203 533 Q194 548 184.200 563 M208 535.500 Q199 550 189 565 M205.500 534.500 Q197 548 186 566 M190 545 Q196 549 193.500 556 M186.500 549 Q192.500 553 190 560 M192 543 L197 547"/>
<path d="M134.300 547 Q150 559 173.500 559.500 Q208 560.500 237.700 554.100 M145 558.500 Q178 566.500 214 559.500 M122 555.500 L123.500 556"/>
<path d="M201.800 469 Q203.800 466.500 205.500 469.500 Q204.800 472.500 202.500 472 Q201 471 201.800 469 Z M195 481 Q196.700 478.500 198.500 481 Q198 484 196 484 Q194.500 483 195 481 Z"/>
<path d="M243.500 470 Q246 500 246.500 540 M249 440 Q250 452 248 462"/>
</g>
<!-- panel frames -->
<g fill="none" stroke="#777" stroke-width="0.8">
<rect x="133" y="224.800" width="222.600" height="95.800"/>
<rect x="133" y="326.300" width="107.200" height="107.400"/>
<rect x="133" y="439.600" width="107.200" height="116.500"/>
<rect x="243.600" y="326.300" width="112" height="229.800"/>
</g>
<!-- small thought bubbles -->
<g fill="#fff" stroke="#555" stroke-width="0.7">
<ellipse cx="196" cy="371.300" rx="1.500" ry="1.100" transform="rotate(20 196 371.3)"/>
<ellipse cx="199.600" cy="372.800" rx="2" ry="1.400" transform="rotate(20 199.6 372.800)"/>
<ellipse cx="203.800" cy="374.400" rx="2.400" ry="1.700" transform="rotate(20 203.8 374.400)"/>
<ellipse cx="208.600" cy="376.400" rx="2.900" ry="2" transform="rotate(20 208.600 376.400)"/>
<ellipse cx="214" cy="378.900" rx="3.400" ry="2.300" transform="rotate(20 214 378.900)"/>
<ellipse cx="209.200" cy="491.700" rx="3.700" ry="2.200" transform="rotate(-12 209.200 491.700)"/>
<ellipse cx="205.600" cy="496.200" rx="2.900" ry="1.800" transform="rotate(-15 205.600 496.200)"/>
<ellipse cx="202.900" cy="499.700" rx="2.200" ry="1.400" transform="rotate(-15 202.900 499.700)"/>
<ellipse cx="200.500" cy="502.600" rx="1.600" ry="1.100" transform="rotate(-15 200.500 502.600)"/>
</g>
<!-- speech bubble 1 -->
<path d="M271.500 259.500 L259.300 266.500 L271.300 264.200" fill="#fff" stroke="#333" stroke-width="0.7"/>
<ellipse cx="312.800" cy="268.200" rx="41.900" ry="50.400" fill="#fff" stroke="#333" stroke-width="0.75"/>
<path d="M271.600 259.800 L262 265.600 L271.400 263.800 Z" fill="#fff"/>
<!-- cloud bubble 2 -->
<path d="M223 381.100 C230 381.100 237 386 239.900 392.500 C241.500 397 242.600 402 242.600 407.700 C247 412 250.500 420 251.500 428 C252 440 250 452 247.300 461.700 C245.500 468 243 473 240.100 476 L237.200 480 C236.800 484 235.500 486.500 233.400 488.500 C231 491.500 228 493.300 224.800 493.300 C222 493.300 220 492 218 490.500 C213.500 487 210.500 482 209.400 476 C208.800 473 208.400 470 208 466.500 C204.500 463 203 458.500 202.200 454 C200 446 199.300 436 200.800 427 C202 419 205 412.500 208.600 408.100 C208.800 401 210 394.500 212.700 389.200 C215 384.500 219 381.100 223 381.100 Z" fill="#fff" stroke="#555" stroke-width="0.900"/>
<!-- dots -->
<circle cx="121.500" cy="556" r="0.600" fill="#8cc"/><circle cx="373" cy="554.500" r="0.700" fill="#999"/>
<text x="244" y="565" font-size="3" fill="#666" text-anchor="middle" font-family="'Liberation Sans',sans-serif">5</text>
<!-- sfx text -->
<g font-family="'Liberation Sans','Noto Sans CJK JP',sans-serif" font-weight="300" fill="#4fb4c9" fill-opacity="0.780">
<text x="332" y="423" font-size="14" transform="rotate(-10 339 416)">ゴ</text>
<text x="336.500" y="439.500" font-size="12.500" transform="rotate(8 342 433)">ソ</text>
<text x="336.500" y="458" font-size="14.500" transform="rotate(-8 344 451)">ゴ</text>
<text x="338" y="478.500" font-size="13" transform="rotate(10 344 471)">ソ</text>
<text x="198" y="394" font-size="9" fill-opacity="0.6" transform="rotate(-15 202 391)">の</text>
<text x="203" y="406" font-size="9" fill-opacity="0.6" transform="rotate(5 207 402)">か</text>
</g>
</svg>
<!-- bubble text -->
<div class="abs vt" style="left:321.300px;top:228.600px">今回はちゃんと譜面</div>
<div class="abs vt" style="left:306.200px;top:228.600px">書いて来てやったか</div>
<div class="abs vt" style="left:290.900px;top:228.600px">ら</div>
<div class="abs vt vt2" style="left:219.700px;top:389.300px">ケツに入れてんのかよ・・</div>

<div class="grp" style="top:55px;height:33px"><div class="grip"></div></div>
<div class="grp" style="top:89px;height:80px"><div class="grip"></div></div>
<div class="grp" style="top:170px;height:33.5px"><div class="grip"></div></div>
<div class="grp" style="top:204.5px;height:33.5px"><div class="grip"></div></div>
<div class="grp" style="top:239px;height:57px"><div class="grip"></div></div>
<div class="grp" style="top:297.5px;height:32.5px"><div class="grip"></div></div>
<div class="grp" style="top:331.5px;height:32.5px"><div class="grip"></div></div>
<div class="grp" style="top:365.5px;height:33.0px"><div class="grip"></div></div>
<div class="grp" style="top:399.5px;height:326px"></div>

<svg style="left:0;top:0" width="768" height="729" viewBox="0 0 768 729">
<g fill="none" stroke="#d8d8d8" stroke-width="1.1"><path d="M494.700 46.800 L492.500 49 L494.700 51.200 M498.200 46.800 L496 49 L498.200 51.200"/></g>
<!-- history -->
<g><rect x="482" y="66.200" width="4.600" height="4.200" fill="#dcdcdc"/><rect x="483.300" y="67.400" width="2" height="1.800" fill="#444"/><rect x="482" y="71.200" width="4.600" height="4.200" fill="#dcdcdc"/><rect x="483.300" y="72.400" width="2" height="1.800" fill="#444"/><rect x="482" y="76.200" width="4.600" height="4.200" fill="#dcdcdc"/>
<path d="M489 80.200 C494.500 78.500 496 72.500 492 69.300" fill="none" stroke="#dcdcdc" stroke-width="1.700"/><path d="M487.600 69.400 L492.800 65.400 L492.800 73.200 Z" fill="#dcdcdc"/></g>
<!-- A| -->
<g fill="none" stroke="#dcdcdc"><path d="M483.400 114 L487.300 102.600 L488.500 102.600 L492.400 114 M484.800 110.200 H491" stroke-width="1.600"/><path d="M495.300 100.800 V115" stroke-width="1.200"/></g>
<!-- brush settings -->
<g fill="#dcdcdc"><path d="M497 125.800 L498.400 127.100 L491.400 135.200 L488.700 132.900 Z"/><path d="M488.100 133.400 L490.900 135.800 C490.300 138.200 487.400 139.200 484 138.600 C486.200 137.400 486.200 134.800 488.100 133.400 Z"/>
<rect x="480.300" y="123.600" width="1.300" height="1.300"/><rect x="482.400" y="123.600" width="3.800" height="1.300"/><rect x="480.300" y="126" width="1.300" height="1.300"/><rect x="482.400" y="126" width="3.800" height="1.300"/><rect x="480.300" y="128.400" width="1.300" height="1.300"/><rect x="482.400" y="128.400" width="3.800" height="1.300"/><rect x="480.300" y="130.800" width="1.300" height="1.300"/><rect x="482.400" y="130.800" width="3.800" height="1.300"/></g>
<!-- brushes -->
<g fill="#dcdcdc"><path d="M479.600 151 C481.500 148.600 484.500 148.400 486.200 150.200 L486.200 152.200 C484.500 153.600 481.500 153.400 479.600 151 Z"/><rect x="486.800" y="150.200" width="10" height="1.900"/>
<path d="M497 155 L497 162.200 C494.500 162.200 492.600 160.600 492 159.600 L492 157.600 C492.600 156.600 494.500 155 497 155 Z"/><rect x="481.400" y="157.600" width="10" height="1.900"/></g>
<!-- play -->
<path d="M483.300 183 L495.300 189 L483.300 195 Z" fill="#dcdcdc"/>
<!-- palette -->
<g><path d="M489 217.400 C484.500 217.400 481 220 481 223.400 C481 226.600 484.400 229 489 229 C493.600 229 497 226.800 497 223.600 C497 222 495.600 221.600 494.400 222 C493 222.400 492 221.600 492.400 220.400 C492.800 218.800 491.400 217.400 489 217.400 Z" fill="#dcdcdc"/><g fill="#4a4a4a"><circle cx="484" cy="223" r="1"/><circle cx="486" cy="226" r="1"/><circle cx="489.500" cy="227" r="1"/><circle cx="493" cy="226" r="1"/><circle cx="486.500" cy="220.400" r="1"/></g></g>
<!-- swatches grid -->
<g><rect x="482" y="251" width="14" height="11.500" fill="#dcdcdc"/><g fill="#2e2e2e"><rect x="483.200" y="253.400" width="3.300" height="2.300" fill="#999"/><rect x="487.400" y="253.400" width="3.300" height="2.300" fill="#777"/><rect x="491.600" y="253.400" width="3.300" height="2.300" fill="#777"/><rect x="483.200" y="256.500" width="3.300" height="2.300" fill="#555"/><rect x="487.400" y="256.500" width="3.300" height="2.300"/><rect x="491.600" y="256.500" width="3.300" height="2.300"/><rect x="483.200" y="259.600" width="3.300" height="2.300"/><rect x="487.400" y="259.600" width="3.300" height="2.300"/><rect x="491.600" y="259.600" width="3.300" height="2.300"/></g></g>
<!-- tools cross -->
<g stroke="#dcdcdc" fill="none"><path d="M484.500 277.500 L489.500 282.500" stroke-width="1.600"/><path d="M490.500 283.500 L494.500 286.200" stroke-width="1.200"/><circle cx="495" cy="286.400" r="1.600" stroke-width="1"/><path d="M482 275 L484 276.800 M484.800 274.600 L484.400 277.600 L481.400 277.800" stroke-width="1.300"/><path d="M496.200 274.600 L489.800 281.600" stroke-width="1.200"/><path d="M488.600 282.600 L483 288" stroke-width="2.600" stroke-linecap="round"/></g>
<!-- info -->
<g><circle cx="488.700" cy="315.500" r="6.500" fill="none" stroke="#dcdcdc" stroke-width="1.200"/><rect x="488" y="314.400" width="1.500" height="5" fill="#dcdcdc"/><circle cx="488.750" cy="312.200" r="0.950" fill="#dcdcdc"/></g>
<!-- properties -->
<g><rect x="482.300" y="343" width="12.400" height="13" rx="1" fill="#dcdcdc"/><rect x="484" y="345.600" width="3.500" height="0.900" fill="#777"/><rect x="484" y="347.400" width="3.500" height="0.900" fill="#777"/><rect x="484" y="349.200" width="3.500" height="0.900" fill="#777"/><rect x="489" y="345.400" width="3.600" height="4.400" fill="#333"/><rect x="484" y="352" width="8.600" height="2" fill="#333"/></g>
<!-- adjustments -->
<g stroke="#dcdcdc" stroke-width="1.100" fill="#535353"><path d="M482 379.600 H496 M482 384.300 H496 M482 389 H496"/><circle cx="486" cy="379.600" r="1.700"/><circle cx="492" cy="384.300" r="1.700"/><circle cx="487.500" cy="389" r="1.700"/></g>
</svg>
<div class="abs" style="left:506px;top:55px;width:15px;height:60px;overflow:hidden"><div class="t" style="left:8.200px;top:5px;font-size:8.500px;color:#c4c4c4;line-height:12px">段落</div><div class="t" style="left:8.200px;top:29px;font-size:8.500px;color:#c4c4c4;line-height:12px">色調補正</div></div>


<!-- layers panel header -->
<svg style="left:0;top:0" width="768" height="729" viewBox="0 0 768 729">
<path d="M525.600 17.600 L530.400 22.400 M530.400 17.600 L525.600 22.400" stroke="#e4e4e4" stroke-width="1.400"/>
<g fill="none" stroke="#d8d8d8" stroke-width="1.100"><path d="M749.200 17.600 L747 19.800 L749.200 22 M752.700 17.600 L750.500 19.800 L752.700 22"/></g>
<g fill="#9a9a9a"><rect x="746" y="33" width="9" height="1.400"/><rect x="746" y="35.300" width="9" height="1.400"/><rect x="746" y="37.600" width="9" height="1.400"/><rect x="746" y="39.900" width="9" height="1.400"/></g>
</svg>
<div class="t" style="left:529.300px;top:29.800px;font-size:9.200px;color:#f0f0f0">レイヤー</div>
<!-- filter row -->
<div class="field" style="left:524.5px;top:57px;width:104.500px;height:14.500px"></div>
<svg style="left:0;top:0" width="768" height="729" viewBox="0 0 768 729">
<circle cx="535.300" cy="63.300" r="2.600" fill="none" stroke="#e0e0e0" stroke-width="1.200"/><path d="M537.200 65.300 L540 68.200" stroke="#e0e0e0" stroke-width="1.400"/>
<path d="M620.50 62.70 L623.30 65.70 L626.10 62.70" fill="none" stroke="#d4d4d4" stroke-width="1.100"/>
<!-- filter icons -->
<g><rect x="643.500" y="59.500" width="10" height="8.500" rx="1" fill="none" stroke="#dcdcdc" stroke-width="1.200"/><path d="M645 66.800 L647.600 63.200 L649.400 65.400 L650.600 64.200 L652.400 66.800 Z" fill="#dcdcdc"/></g>
<g><circle cx="668" cy="64" r="4.400" fill="none" stroke="#dcdcdc" stroke-width="1.200"/><path d="M665 67.200 A4.400 4.400 0 0 1 671.200 61 Z" fill="#dcdcdc"/></g>
<g><rect x="706" y="60.600" width="7.600" height="6.800" fill="none" stroke="#dcdcdc" stroke-width="1.200"/><g fill="#dcdcdc"><rect x="704.500" y="59" width="2.600" height="2.600"/><rect x="712.500" y="59" width="2.600" height="2.600"/><rect x="704.500" y="66.300" width="2.600" height="2.600"/><rect x="712.500" y="66.300" width="2.600" height="2.600"/></g></g>
<g><path d="M728.200 59 H732 L734.800 61.800 V68.800 H728.200 Z" fill="none" stroke="#dcdcdc" stroke-width="1.100"/><rect x="726.200" y="64.200" width="5.600" height="4.800" fill="#dcdcdc"/><path d="M727.400 64.200 V62.800 Q729 61 730.600 62.800 V64.200" fill="none" stroke="#dcdcdc" stroke-width="1"/></g>
<rect x="748.400" y="57" width="7.200" height="16.400" rx="3.600" fill="#484848" stroke="#5e5e5e" stroke-width="0.600"/><circle cx="752" cy="60.300" r="3.300" fill="#e6e6e6"/>
<!-- lock row icons -->
<g><rect x="561" y="108" width="9.600" height="9.600" fill="#8a8a8a"/><g fill="#535353"><rect x="562.200" y="109.200" width="2.400" height="2.400"/><rect x="567" y="109.200" width="2.400" height="2.400"/><rect x="564.600" y="111.600" width="2.400" height="2.400"/><rect x="562.200" y="114" width="2.400" height="2.400"/><rect x="567" y="114" width="2.400" height="2.400"/></g></g>
<g fill="#8e8e8e"><path d="M589.800 106.600 L591.300 107.800 L586.300 115.300 L583.600 113.200 Z"/><path d="M583 113.800 L585.800 116 C585.100 118.300 582.400 119.100 579.500 118.500 C581.400 117.400 581.300 115 583 113.800 Z"/></g>
<g transform="translate(602.800 112.800) scale(0.850)" fill="#8c8c8c"><path d="M0 -6.200 L2.400 -3.200 L0.700 -3.200 L0.700 -0.700 L3.200 -0.700 L3.200 -2.400 L6.200 0 L3.200 2.400 L3.200 0.700 L0.700 0.700 L0.700 3.200 L2.400 3.200 L0 6.200 L-2.400 3.200 L-0.700 3.200 L-0.700 0.700 L-3.200 0.700 L-3.200 2.400 L-6.200 0 L-3.200 -2.400 L-3.200 -0.700 L-0.700 -0.700 L-0.700 -3.200 L-2.400 -3.200 Z"/></g>
<g fill="none" stroke="#dcdcdc" stroke-width="1.300"><path d="M617.800 107.300 V117.700 M624.600 109.800 V117.700 M615.400 109.800 H624.600 M615.400 115.400 H627"/><path d="M620 111.200 H623.600 V114 Z" fill="#dcdcdc" stroke="none"/><path d="M624.400 108.800 L627 106.400" stroke-width="1" stroke-dasharray="1.200 0.800"/></g>
<g><rect x="635.400" y="111.400" width="8.800" height="6.600" rx="0.800" fill="#dcdcdc"/><path d="M637.600 111.400 V109.800 Q639.800 106.600 642 109.800 V111.400" fill="none" stroke="#dcdcdc" stroke-width="1.400"/><rect x="639" y="113.600" width="1.600" height="1.800" fill="#535353"/></g>
</svg>
<div class="t" style="left:542px;top:58.300px;font-size:8.500px;color:#f0f0f0">種類</div>
<div class="abs" style="left:683px;top:55.500px;width:12px;height:16px;line-height:16px;text-align:center;font-family:'Liberation Serif',serif;font-weight:700;font-size:13.500px;color:#dcdcdc">T</div>
<div class="hline" style="left:521px;top:75.500px;width:237px;background:#4a4a4a"></div>
<!-- blend row -->
<div class="field" style="left:524.5px;top:81px;width:140.500px;height:15px"></div>
<div class="t" style="left:529.500px;top:82.500px;font-size:8.500px;color:#f0f0f0">通常</div>
<div class="t" style="left:668.500px;top:82.500px;font-size:8.500px;color:#e0e0e0">不透明度：</div>
<div class="abs" style="left:709px;top:80.500px;width:46.500px;height:16px;background:#454545;border:1px solid #2f6fd0;border-radius:2.500px"></div>
<div class="abs" style="left:742px;top:80.500px;width:1px;height:16px;background:#2f6fd0"></div>
<div class="t" style="left:712.500px;top:82.500px;font-size:9.500px;color:#f4f4f4">100%</div>
<div class="hline" style="left:521px;top:100.500px;width:237px;background:#4a4a4a"></div>
<!-- lock row -->
<div class="t" style="left:525.500px;top:106.800px;font-size:8.500px;color:#f0f0f0">ロック：</div>
<div class="t" style="left:685px;top:106.800px;font-size:8.500px;color:#f0f0f0">塗り：</div>
<div class="field" style="left:709.5px;top:105px;width:32.500px;height:15.500px;border-color:#5e5e5e"></div>
<div class="field" style="left:743.5px;top:105px;width:11.500px;height:15.500px;border-color:#5e5e5e"></div>
<div class="t" style="left:712.500px;top:106.800px;font-size:9.500px;color:#f4f4f4">100%</div>
<!-- list -->
<div class="hline" style="left:521px;top:125px;width:237px;background:#474747"></div>
<div class="abs" style="left:545px;top:125.500px;width:1px;height:587px;background:#494949"></div>
<div class="hline" style="left:521px;top:160.0px;width:225.500px"></div>
<div class="thumb" style="left:549.3px;top:129.55px"></div>
<div class="ln" style="left:576px;top:137.60px">基本枠</div>
<div class="hline" style="left:521px;top:194.2px;width:225.500px"></div>
<div class="thumb" style="left:549.3px;top:164.15px"></div>
<div class="ln" style="left:576px;top:172.20px">トンボ</div>
<div class="hline" style="left:521px;top:215.3px;width:225.500px"></div>
<div class="ln" style="left:580.6px;top:199.05px">(ノンブル)</div>
<div class="hline" style="left:521px;top:249.9px;width:225.500px"></div>
<div class="abs" style="left:569.500px;top:224.30px;width:14px;height:18px;line-height:18px;text-align:center;font-family:'Liberation Serif',serif;font-weight:700;font-size:16.500px;color:#e0e0e0">T</div>
<div class="ln" style="left:596.5px;top:227.70px"><span class="dg">5</span></div>
<div class="hline" style="left:521px;top:284.5px;width:225.500px"></div>
<div class="abs" style="left:569.500px;top:258.90px;width:14px;height:18px;line-height:18px;text-align:center;font-family:'Liberation Serif',serif;font-weight:700;font-size:16.500px;color:#e0e0e0">T</div>
<div class="ln" style="left:596.5px;top:262.30px"><span class="dg">5</span></div>
<div class="abs" style="left:546px;top:285px;width:200.500px;height:20.5px;background:#6a6a6a"></div>
<div class="hline" style="left:521px;top:305.0px;width:225.500px"></div>
<div class="ln" style="left:580.6px;top:289.05px">今回はちゃんと譜面...から 大丈夫だぞ。</div>
<div class="hline" style="left:521px;top:339.5px;width:225.500px"></div>
<div class="abs" style="left:569.500px;top:313.95px;width:14px;height:18px;line-height:18px;text-align:center;font-family:'Liberation Serif',serif;font-weight:700;font-size:16.500px;color:#e0e0e0">T</div>
<div class="ln" style="left:596.5px;top:317.35px">ケツに入れてんのかよ・・・。</div>
<div class="hline" style="left:521px;top:374.0px;width:225.500px"></div>
<div class="abs" style="left:569.500px;top:348.45px;width:14px;height:18px;line-height:18px;text-align:center;font-family:'Liberation Serif',serif;font-weight:700;font-size:16.500px;color:#e0e0e0">T</div>
<div class="ln" style="left:596.5px;top:351.85px">今回はちゃんと譜... 大丈夫だぞ。</div>
<div class="hline" style="left:521px;top:408.5px;width:225.500px"></div>
<div class="thumb" style="left:549.3px;top:378.30px"></div>
<div class="ln" style="left:576px;top:386.35px">縦雲小_<span class="dg">02</span></div>
<div class="hline" style="left:521px;top:442.8px;width:225.500px"></div>
<div class="thumb" style="left:549.3px;top:412.70px"></div>
<div class="ln" style="left:576px;top:420.75px">フキダシ <span class="dg">1</span></div>
<div class="hline" style="left:521px;top:463.7px;width:225.500px"></div>
<div class="ln" style="left:580.6px;top:447.55px"><span class="dw">3</span>段<span class="dw">4</span>コマ<span class="dw">3</span></div>
<div class="hline" style="left:521px;top:498.3px;width:225.500px"></div>
<div class="thumb" style="left:563.1999999999999px;top:468.05px"></div>
<div class="ln" style="left:590px;top:476.10px">コマ枠 <span class="dg">1</span></div>
<div class="hline" style="left:521px;top:532.5px;width:225.500px"></div>
<div class="mask" style="left:599.5px;top:503.10px"></div>
<div class="abs" style="left:603.2px;top:506.2px;width:13.6px;height:5.9px;background:#fff"></div>
<div class="ln" style="left:626.6px;top:510.50px">コマ枠 <span class="dg">1</span></div>
<div class="hline" style="left:521px;top:567.1px;width:225.500px"></div>
<div class="thumb" style="left:563.1999999999999px;top:536.85px"></div>
<div class="ln" style="left:590px;top:544.90px">コマ枠 <span class="dg">2</span></div>
<div class="hline" style="left:521px;top:601.3px;width:225.500px"></div>
<div class="mask" style="left:599.5px;top:571.90px"></div>
<div class="abs" style="left:609.4px;top:580px;width:7.4px;height:13.6px;background:#fff"></div>
<div class="ln" style="left:626.6px;top:579.30px">コマ枠 <span class="dg">2</span></div>
<div class="hline" style="left:521px;top:635.7px;width:225.500px"></div>
<div class="thumb" style="left:563.1999999999999px;top:605.55px"></div>
<div class="ln" style="left:590px;top:613.60px">コマ枠 <span class="dg">3</span></div>
<div class="hline" style="left:521px;top:670.0px;width:225.500px"></div>
<div class="mask" style="left:599.5px;top:640.55px"></div>
<div class="abs" style="left:603.3px;top:649.8px;width:6.7px;height:5.9px;background:#fff"></div>
<div class="ln" style="left:626.6px;top:647.95px">コマ枠 <span class="dg">3</span></div>
<div class="hline" style="left:521px;top:704.5px;width:225.500px"></div>
<div class="thumb" style="left:563.1999999999999px;top:674.30px"></div>
<div class="ln" style="left:590px;top:682.35px">コマ枠 <span class="dg">4</span></div>
<div class="abs" style="left:599.5px;top:708.6px;width:20px;height:4px;background:#000"></div>

<svg style="left:0;top:0" width="768" height="729" viewBox="0 0 768 729">
<g transform="translate(533.7 144.10)"><path d="M-5.700 0 C-3.600 -3.300 -1.600 -3.900 0 -3.900 C1.600 -3.900 3.600 -3.300 5.700 0 C3.600 3.300 1.600 3.900 0 3.900 C-1.600 3.900 -3.600 3.300 -5.700 0 Z" fill="#e4e4e4"/><circle cx="0" cy="-0.300" r="2.300" fill="#4a4a4a"/><circle cx="-0.800" cy="-1" r="0.800" fill="#d0d0d0"/></g><g transform="translate(533.7 178.70)"><path d="M-5.700 0 C-3.600 -3.300 -1.600 -3.900 0 -3.900 C1.600 -3.900 3.600 -3.300 5.700 0 C3.600 3.300 1.600 3.900 0 3.900 C-1.600 3.900 -3.600 3.300 -5.700 0 Z" fill="#e4e4e4"/><circle cx="0" cy="-0.300" r="2.300" fill="#4a4a4a"/><circle cx="-0.800" cy="-1" r="0.800" fill="#d0d0d0"/></g><g transform="translate(533.7 205.55)"><path d="M-5.700 0 C-3.600 -3.300 -1.600 -3.900 0 -3.900 C1.600 -3.900 3.600 -3.300 5.700 0 C3.600 3.300 1.600 3.900 0 3.900 C-1.600 3.900 -3.600 3.300 -5.700 0 Z" fill="#e4e4e4"/><circle cx="0" cy="-0.300" r="2.300" fill="#4a4a4a"/><circle cx="-0.800" cy="-1" r="0.800" fill="#d0d0d0"/></g><path d="M550.10 203.80 L552.90 206.80 L555.70 203.80" fill="none" stroke="#d4d4d4" stroke-width="1.100"/><path d="M558.9 201.2 Q558.9 200.2 559.9 200.2 L563.5 200.2 L564.7 201.6 L570.5 201.6 Q571.5 201.6 571.5 202.6 L571.5 210.0 L558.9 210.0 Z" fill="#dcdcdc"/><rect x="560.0" y="202.8" width="10.4" height="1.3" fill="#535353"/><g transform="translate(533.7 234.20)"><path d="M-5.700 0 C-3.600 -3.300 -1.600 -3.900 0 -3.900 C1.600 -3.900 3.600 -3.300 5.700 0 C3.600 3.300 1.600 3.900 0 3.900 C-1.600 3.900 -3.600 3.300 -5.700 0 Z" fill="#e4e4e4"/><circle cx="0" cy="-0.300" r="2.300" fill="#4a4a4a"/><circle cx="-0.800" cy="-1" r="0.800" fill="#d0d0d0"/></g><g transform="translate(533.7 268.80)"><path d="M-5.700 0 C-3.600 -3.300 -1.600 -3.900 0 -3.900 C1.600 -3.900 3.600 -3.300 5.700 0 C3.600 3.300 1.600 3.900 0 3.900 C-1.600 3.900 -3.600 3.300 -5.700 0 Z" fill="#e4e4e4"/><circle cx="0" cy="-0.300" r="2.300" fill="#4a4a4a"/><circle cx="-0.800" cy="-1" r="0.800" fill="#d0d0d0"/></g><g transform="translate(533.7 295.55)"><path d="M-5.700 0 C-3.600 -3.300 -1.600 -3.900 0 -3.900 C1.600 -3.900 3.600 -3.300 5.700 0 C3.600 3.300 1.600 3.900 0 3.900 C-1.600 3.900 -3.600 3.300 -5.700 0 Z" fill="#e4e4e4"/><circle cx="0" cy="-0.300" r="2.300" fill="#4a4a4a"/><circle cx="-0.800" cy="-1" r="0.800" fill="#d0d0d0"/></g><path d="M550.10 293.85 L552.90 296.85 L555.70 293.85" fill="none" stroke="#d4d4d4" stroke-width="1.100"/><path d="M558.9 291.2 Q558.9 290.2 559.9 290.2 L563.5 290.2 L564.7 291.6 L570.5 291.6 Q571.5 291.6 571.5 292.6 L571.5 300.0 L558.9 300.0 Z" fill="#dcdcdc"/><rect x="560.0" y="292.8" width="10.4" height="1.3" fill="#6a6a6a"/><g transform="translate(533.7 323.85)"><path d="M-5.700 0 C-3.600 -3.300 -1.600 -3.900 0 -3.900 C1.600 -3.900 3.600 -3.300 5.700 0 C3.600 3.300 1.600 3.900 0 3.900 C-1.600 3.900 -3.600 3.300 -5.700 0 Z" fill="#e4e4e4"/><circle cx="0" cy="-0.300" r="2.300" fill="#4a4a4a"/><circle cx="-0.800" cy="-1" r="0.800" fill="#d0d0d0"/></g><g transform="translate(533.7 358.35)"><path d="M-5.700 0 C-3.600 -3.300 -1.600 -3.900 0 -3.900 C1.600 -3.900 3.600 -3.300 5.700 0 C3.600 3.300 1.600 3.900 0 3.900 C-1.600 3.900 -3.600 3.300 -5.700 0 Z" fill="#e4e4e4"/><circle cx="0" cy="-0.300" r="2.300" fill="#4a4a4a"/><circle cx="-0.800" cy="-1" r="0.800" fill="#d0d0d0"/></g><g transform="translate(533.7 392.85)"><path d="M-5.700 0 C-3.600 -3.300 -1.600 -3.900 0 -3.900 C1.600 -3.900 3.600 -3.300 5.700 0 C3.600 3.300 1.600 3.900 0 3.900 C-1.600 3.900 -3.600 3.300 -5.700 0 Z" fill="#e4e4e4"/><circle cx="0" cy="-0.300" r="2.300" fill="#4a4a4a"/><circle cx="-0.800" cy="-1" r="0.800" fill="#d0d0d0"/></g><circle cx="557.5" cy="393.2" r="1.2" fill="#fff"/><circle cx="558.5" cy="394.2" r="0.9" fill="#fff"/><g transform="translate(533.7 427.25)"><path d="M-5.700 0 C-3.600 -3.300 -1.600 -3.900 0 -3.900 C1.600 -3.900 3.600 -3.300 5.700 0 C3.600 3.300 1.600 3.900 0 3.900 C-1.600 3.900 -3.600 3.300 -5.700 0 Z" fill="#e4e4e4"/><circle cx="0" cy="-0.300" r="2.300" fill="#4a4a4a"/><circle cx="-0.800" cy="-1" r="0.800" fill="#d0d0d0"/></g><ellipse cx="564" cy="420.1" rx="1.800" ry="2.200" fill="#fff"/><g transform="translate(533.7 454.05)"><path d="M-5.700 0 C-3.600 -3.300 -1.600 -3.900 0 -3.900 C1.600 -3.900 3.600 -3.300 5.700 0 C3.600 3.300 1.600 3.900 0 3.900 C-1.600 3.900 -3.600 3.300 -5.700 0 Z" fill="#e4e4e4"/><circle cx="0" cy="-0.300" r="2.300" fill="#4a4a4a"/><circle cx="-0.800" cy="-1" r="0.800" fill="#d0d0d0"/></g><path d="M550.10 452.35 L552.90 455.35 L555.70 452.35" fill="none" stroke="#d4d4d4" stroke-width="1.100"/><path d="M558.9 449.7 Q558.9 448.7 559.9 448.7 L563.5 448.7 L564.7 450.1 L570.5 450.1 Q571.5 450.1 571.5 451.1 L571.5 458.5 L558.9 458.5 Z" fill="#dcdcdc"/><rect x="560.0" y="451.3" width="10.4" height="1.3" fill="#535353"/><g transform="translate(533.7 482.60)"><path d="M-5.700 0 C-3.600 -3.300 -1.600 -3.900 0 -3.900 C1.600 -3.900 3.600 -3.300 5.700 0 C3.600 3.300 1.600 3.900 0 3.900 C-1.600 3.900 -3.600 3.300 -5.700 0 Z" fill="#e4e4e4"/><circle cx="0" cy="-0.300" r="2.300" fill="#4a4a4a"/><circle cx="-0.800" cy="-1" r="0.800" fill="#d0d0d0"/></g><g transform="translate(533.7 517.00)"><path d="M-5.700 0 C-3.600 -3.300 -1.600 -3.900 0 -3.900 C1.600 -3.900 3.600 -3.300 5.700 0 C3.600 3.300 1.600 3.900 0 3.900 C-1.600 3.900 -3.600 3.300 -5.700 0 Z" fill="#e4e4e4"/><circle cx="0" cy="-0.300" r="2.300" fill="#4a4a4a"/><circle cx="-0.800" cy="-1" r="0.800" fill="#d0d0d0"/></g><path d="M563.10 514.50 L565.90 517.50 L568.70 514.50" fill="none" stroke="#d4d4d4" stroke-width="1.100"/><path d="M572.3 511.8 Q572.3 510.8 573.3 510.8 L576.9 510.8 L578.1 512.2 L583.9 512.2 Q584.9 512.2 584.9 513.2 L584.9 520.6 L572.3 520.6 Z" fill="#dcdcdc"/><rect x="573.4" y="513.4" width="10.4" height="1.3" fill="#535353"/><g fill="none" stroke="#dcdcdc" stroke-width="1.100"><rect x="590.500" y="510.7" width="5" height="5" rx="2"/><rect x="590.500" y="516.5" width="5" height="5" rx="2"/><path d="M593 513.7 V518.5"/></g><g transform="translate(533.7 551.40)"><path d="M-5.700 0 C-3.600 -3.300 -1.600 -3.900 0 -3.900 C1.600 -3.900 3.600 -3.300 5.700 0 C3.600 3.300 1.600 3.900 0 3.900 C-1.600 3.900 -3.600 3.300 -5.700 0 Z" fill="#e4e4e4"/><circle cx="0" cy="-0.300" r="2.300" fill="#4a4a4a"/><circle cx="-0.800" cy="-1" r="0.800" fill="#d0d0d0"/></g><g transform="translate(533.7 585.80)"><path d="M-5.700 0 C-3.600 -3.300 -1.600 -3.900 0 -3.900 C1.600 -3.900 3.600 -3.300 5.700 0 C3.600 3.300 1.600 3.900 0 3.900 C-1.600 3.900 -3.600 3.300 -5.700 0 Z" fill="#e4e4e4"/><circle cx="0" cy="-0.300" r="2.300" fill="#4a4a4a"/><circle cx="-0.800" cy="-1" r="0.800" fill="#d0d0d0"/></g><path d="M563.10 583.30 L565.90 586.30 L568.70 583.30" fill="none" stroke="#d4d4d4" stroke-width="1.100"/><path d="M572.3 580.6 Q572.3 579.6 573.3 579.6 L576.9 579.6 L578.1 581.0 L583.9 581.0 Q584.9 581.0 584.9 582.0 L584.9 589.4 L572.3 589.4 Z" fill="#dcdcdc"/><rect x="573.4" y="582.2" width="10.4" height="1.3" fill="#535353"/><g fill="none" stroke="#dcdcdc" stroke-width="1.100"><rect x="590.500" y="579.5" width="5" height="5" rx="2"/><rect x="590.500" y="585.3" width="5" height="5" rx="2"/><path d="M593 582.5 V587.3"/></g><g transform="translate(533.7 620.10)"><path d="M-5.700 0 C-3.600 -3.300 -1.600 -3.900 0 -3.900 C1.600 -3.900 3.600 -3.300 5.700 0 C3.600 3.300 1.600 3.900 0 3.900 C-1.600 3.900 -3.600 3.300 -5.700 0 Z" fill="#e4e4e4"/><circle cx="0" cy="-0.300" r="2.300" fill="#4a4a4a"/><circle cx="-0.800" cy="-1" r="0.800" fill="#d0d0d0"/></g><g transform="translate(533.7 654.45)"><path d="M-5.700 0 C-3.600 -3.300 -1.600 -3.900 0 -3.900 C1.600 -3.900 3.600 -3.300 5.700 0 C3.600 3.300 1.600 3.900 0 3.900 C-1.600 3.900 -3.600 3.300 -5.700 0 Z" fill="#e4e4e4"/><circle cx="0" cy="-0.300" r="2.300" fill="#4a4a4a"/><circle cx="-0.800" cy="-1" r="0.800" fill="#d0d0d0"/></g><path d="M563.10 652.00 L565.90 655.00 L568.70 652.00" fill="none" stroke="#d4d4d4" stroke-width="1.100"/><path d="M572.3 649.2 Q572.3 648.2 573.3 648.2 L576.9 648.2 L578.1 649.6 L583.9 649.6 Q584.9 649.6 584.9 650.6 L584.9 658.0 L572.3 658.0 Z" fill="#dcdcdc"/><rect x="573.4" y="650.9" width="10.4" height="1.3" fill="#535353"/><g fill="none" stroke="#dcdcdc" stroke-width="1.100"><rect x="590.500" y="648.1" width="5" height="5" rx="2"/><rect x="590.500" y="654.0" width="5" height="5" rx="2"/><path d="M593 651.1 V656.0"/></g><g transform="translate(533.7 688.85)"><path d="M-5.700 0 C-3.600 -3.300 -1.600 -3.900 0 -3.900 C1.600 -3.900 3.600 -3.300 5.700 0 C3.600 3.300 1.600 3.900 0 3.900 C-1.600 3.900 -3.600 3.300 -5.700 0 Z" fill="#e4e4e4"/><circle cx="0" cy="-0.300" r="2.300" fill="#4a4a4a"/><circle cx="-0.800" cy="-1" r="0.800" fill="#d0d0d0"/></g>
<path d="M657.50 87.10 L660.30 90.10 L663.10 87.10" fill="none" stroke="#d4d4d4" stroke-width="1.100"/><path d="M746.00 87.10 L748.80 90.10 L751.60 87.10" fill="none" stroke="#d4d4d4" stroke-width="1.100"/><path d="M746.20 111.40 L749.00 114.40 L751.80 111.40" fill="none" stroke="#d4d4d4" stroke-width="1.100"/>
<!-- scrollbar -->
<rect x="746.500" y="125.500" width="12" height="587" fill="#4c4c4c"/>
<rect x="749.600" y="128" width="7.600" height="309" rx="3.800" fill="#696969"/>
</svg>
<!-- footer -->
<div class="abs" style="left:521px;top:712.300px;width:237.500px;height:17px;background:#535353;border-top:1px solid #454545"></div>
<svg style="left:0;top:0" width="768" height="729" viewBox="0 0 768 729">
<g fill="none" stroke="#8a8a8a" stroke-width="1.200"><rect x="589" y="720.200" width="6.400" height="5" rx="2.500"/><rect x="594.200" y="720.200" width="6.400" height="5" rx="2.500"/></g>
<g><rect x="635" y="718.500" width="11.600" height="8.200" rx="1" fill="#dcdcdc"/><circle cx="640.800" cy="722.600" r="2.300" fill="#444"/></g>
<g><circle cx="663.200" cy="722.700" r="4.500" fill="none" stroke="#dcdcdc" stroke-width="1.200"/><path d="M660 725.900 A4.500 4.500 0 0 1 666.400 719.500 Z" fill="#dcdcdc"/></g>
<path d="M680.400 719 Q680.400 718 681.400 718 L684.800 718 L686 719.400 L690 719.400 Q691 719.400 691 720.400 L691 727 L680.400 727 Z" fill="#dcdcdc"/>
<g><rect x="703.500" y="718" width="9.600" height="9.600" rx="1" fill="none" stroke="#dcdcdc" stroke-width="1.200"/><path d="M705.800 722.800 H710.800 M708.300 720.300 V725.300" stroke="#dcdcdc" stroke-width="1.200"/></g>
<g><path d="M727.400 720.400 H734.600 L733.900 728 H728.100 Z" fill="#dcdcdc"/><path d="M726.400 719.500 H735.600 M729.400 719.400 V718.200 H732.600 V719.400" stroke="#dcdcdc" stroke-width="1" fill="none"/><path d="M729.600 721.600 V727 M731 721.600 V727 M732.400 721.600 V727" stroke="#666" stroke-width="0.500"/></g>
</svg>
<div class="t" style="left:612.500px;top:716px;font-size:11.500px;font-style:italic;font-weight:400;font-family:'Liberation Serif',serif;color:#e0e0e0;line-height:14px">fx</div>
<!-- behind-panel slivers at right edge -->
<svg style="left:0;top:0" width="768" height="729" viewBox="0 0 768 729">
<defs><linearGradient id="shr" x1="0" x2="1"><stop offset="0" stop-color="#000" stop-opacity="0.320"/><stop offset="1" stop-color="#000" stop-opacity="0"/></linearGradient></defs>
<rect x="759" y="44" width="9" height="10" fill="#3c3c3c"/>
<rect x="759" y="54" width="9" height="5.500" fill="#444"/>
<rect x="759" y="59.500" width="9" height="13.500" fill="#545454"/>
<rect x="759" y="73" width="9" height="7" fill="#464646"/>
<rect x="759" y="80" width="9" height="645" fill="#505050"/>
<path d="M763 27 L766 30 L769 27" fill="none" stroke="#cfcfcf" stroke-width="1.100"/>
<g fill="none" stroke="#d8d8d8" stroke-width="1.100"><path d="M762.500 46.800 L764.700 49 L762.500 51.200 M766 46.800 L768.200 49 L766 51.200"/></g>
<g fill="#9a9a9a"><rect x="763" y="63" width="6" height="1.300"/><rect x="763" y="65.200" width="6" height="1.300"/><rect x="763" y="67.400" width="6" height="1.300"/><rect x="763" y="69.600" width="6" height="1.300"/></g>
<rect x="759" y="14" width="4" height="711" fill="url(#shr)"/>
</svg>

<div class="abs be" style="left:0;width:520.500px"></div><div class="abs be" style="left:759px;width:9px"></div>
</div></body>
</html>
